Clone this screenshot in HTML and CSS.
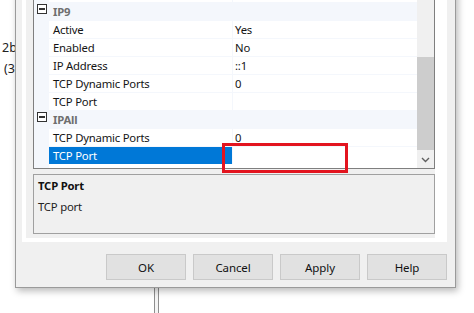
FILE: index.html
```html
<!DOCTYPE html>
<html lang="en">
<head>
<meta charset="utf-8">
<title>TCP/IP Properties</title>
<link rel="stylesheet" href="styles.css">
</head>
<body>
<div class="desktop">
  <div class="bgwin">
    <span class="bgtext t1">2b</span>
    <span class="bgtext t2">(32</span>
    <div class="bgline"></div>
  </div>

  <div class="dialog">
    <div class="panel">
      <div class="grid">
        <div class="rows">
          <div class="row"><div class="gut"></div><div class="name"></div><div class="val"></div></div>
          <div class="row cat"><div class="gut"><span class="exp"></span></div><div class="name">IP9</div></div>
          <div class="row"><div class="gut"></div><div class="name">Active</div><div class="val">Yes</div></div>
          <div class="row"><div class="gut"></div><div class="name">Enabled</div><div class="val">No</div></div>
          <div class="row"><div class="gut"></div><div class="name">IP Address</div><div class="val">::1</div></div>
          <div class="row"><div class="gut"></div><div class="name">TCP Dynamic Ports</div><div class="val">0</div></div>
          <div class="row"><div class="gut"></div><div class="name">TCP Port</div><div class="val"></div></div>
          <div class="row cat"><div class="gut"><span class="exp"></span></div><div class="name">IPAll</div></div>
          <div class="row"><div class="gut"></div><div class="name">TCP Dynamic Ports</div><div class="val">0</div></div>
          <div class="row selected"><div class="gut"></div><div class="name">TCP Port</div><div class="val"></div></div>
        </div>
        <div class="sbar">
          <div class="track"><div class="thumb"></div></div>
          <div class="arrow">
            <svg width="9" height="6" viewBox="0 0 9 6"><path d="M1 1 L4.5 4.5 L8 1" fill="none" stroke="#606060" stroke-width="1.4"/></svg>
          </div>
        </div>
      </div>
      <div class="desc">
        <div class="dtitle">TCP Port</div>
        <div class="dtext">TCP port</div>
      </div>
    </div>
    <div class="buttons">
      <button class="btn">OK</button>
      <button class="btn">Cancel</button>
      <button class="btn">Apply</button>
      <button class="btn">Help</button>
    </div>
  </div>

  <div class="highlight"></div>
</div>
</body>
</html>
```

FILE: styles.css
```css
* { box-sizing: border-box; }
html, body { margin: 0; padding: 0; background: #fff; }
body { font-family: "Noto Sans", "Open Sans", sans-serif; font-size: 11.3px; letter-spacing: -0.2px; color: #141414; }

.desktop { position: relative; width: 474px; height: 313px; overflow: hidden; background: #fff; }

.bgtext { position: absolute; font-size: 12.5px; line-height: 16px; color: #222; letter-spacing: 0; }
.t1 { left: 2px; top: 40px; }
.t2 { left: 4px; top: 61px; }
.bgline { position: absolute; left: 154px; top: 270px; width: 5px; height: 50px;
  border-left: 1px solid #8e8e8e; border-right: 1px solid #8e8e8e; background: #f4f4f4; }

.dialog { position: absolute; left: 15px; top: -22px; width: 441px;
  border: 1px solid #9a9a9a; background: #f0f0f0;
  padding: 0 8px 7px 6px;
  box-shadow: 2px 3px 7px rgba(0,0,0,0.28); }

.panel { border-style: solid; border-color: #fff; border-width: 4px 12px 4px 4px;
  padding: 0 0 4px 7px; background: #f0f0f0; }

.grid { display: flex; border: 1px solid #7f7f7f; background: #fff; }
.rows { flex: 1; padding-bottom: 4px;
  background: linear-gradient(to right, #f4f7fc 15px, #fff 15px); }
.row { display: flex; height: 18px; border-top: 1px solid #f4f7fc; line-height: 17px; white-space: nowrap; }
.gut { width: 15px; flex: none; background: #f4f7fc; display: flex; align-items: center; justify-content: center; }
.name { width: 184px; flex: none; padding-left: 4px; border-right: 1px solid #f4f7fc; }
.val { flex: 1; padding-left: 2px; }
.row.cat { background: #f4f7fc; }
.row.cat .name { flex: 1; border-right: 0; font-weight: 700; color: #6f6f6f; }
.row.selected .name { background: #0078d7; color: #fff; }

.exp { position: relative; width: 10px; height: 10px; border: 1px solid #333; background: #fff; margin-top: -5px; }
.exp::after { content: ""; position: absolute; left: 1px; top: 3px; width: 6px; height: 2px; background: #333; }

.sbar { width: 17px; flex: none; display: flex; flex-direction: column; background: #f0f0f0; }
.track { flex: 1; }
.thumb { margin: 73px 0 0 0; height: 93px; background: #cdcdcd; }
.arrow { height: 17px; display: flex; align-items: center; justify-content: center; }

.desc { margin-top: 5px; height: 60px; border: 1px solid #a0a0a0; background: #f0f0f0; padding: 2px 4px; line-height: 17px; }
.dtitle { font-weight: 700; color: #111; margin-bottom: 4px; }
.dtext { color: #222; }

.buttons { display: flex; justify-content: flex-end; gap: 7px; margin-top: 12px; }
.btn { width: 80px; height: 26px; margin: 0; background: #e1e1e1; border: 1px solid #c9c9c9;
  font-family: "Noto Sans", "Open Sans", sans-serif; font-size: 11.5px; letter-spacing: -0.1px; color: #111; padding: 0; }

.highlight { position: absolute; left: 222px; top: 143px; width: 126px; height: 30px; border: 3px solid #e3141f; }
```
